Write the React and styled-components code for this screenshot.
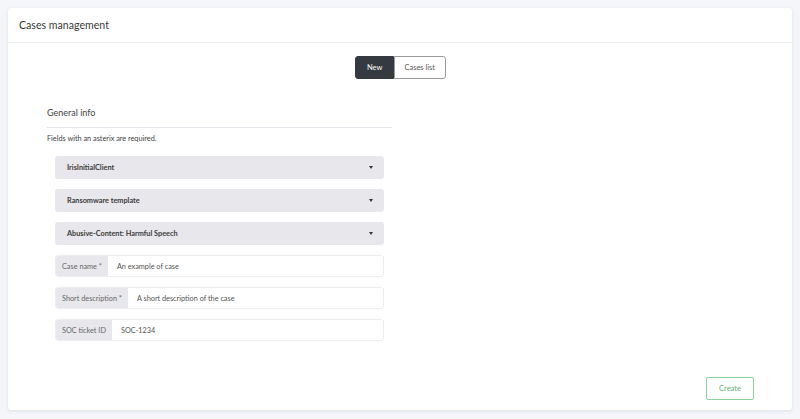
import React from 'react';
import styled, { createGlobalStyle } from 'styled-components';

const GlobalStyle = createGlobalStyle`
  html, body {
    margin: 0;
    padding: 0;
    background: #f4f6fa;
    font-family: Lato, "Open Sans", sans-serif;
    color: #333;
  }
`

const Page = styled.div`
  padding: 8px;
  height: 419px;
  box-sizing: border-box;
`

const Card = styled.div`
  background: #fff;
  border-radius: 4px;
  box-shadow: 0 1px 4px rgba(60, 70, 100, 0.12);
  height: 402px;
  display: flex;
  flex-direction: column;
`

const CardHeader = styled.div`
  height: 34px;
  display: flex;
  align-items: center;
  padding: 0 11px;
  border-bottom: 1px solid #ebedf2;
  font-size: 10.6px;
  color: #3a3a3a;
`

const CardBody = styled.div`
  flex: 1;
  display: flex;
  flex-direction: column;
  padding: 13px 38px 10px 39px;
`

const Toggle = styled.div`
  display: flex;
  justify-content: center;
`

const ToggleButton = styled.button`
  height: 23px;
  padding: 0 ${p => (p.active ? '10.5px' : '9.5px')};
  font-family: inherit;
  font-size: 7.5px;
  border: 1px solid ${p => (p.active ? '#343a40' : '#9a9a9a')};
  background: ${p => (p.active ? '#343a40' : '#fff')};
  color: ${p => (p.active ? '#fff' : '#555')};
  border-radius: ${p => (p.active ? '3px 0 0 3px' : '0 3px 3px 0')};
  cursor: pointer;
`

const Form = styled.div`
  width: 345px;
  margin-top: 28px;
`

const SectionTitle = styled.div`
  font-size: 9px;
  color: #444;
  padding-bottom: 9px;
  border-bottom: 1px solid #e3e5ea;
`

const Hint = styled.div`
  font-size: 7.3px;
  color: #444;
  margin-top: 6px;
  margin-bottom: 13px;
`

const Fields = styled.div`
  display: flex;
  flex-direction: column;
  gap: 10px;
  padding-left: 8px;
  width: 329px;
`

const Select = styled.div`
  height: 23px;
  background: #e8e8ec;
  border-radius: 3px;
  display: flex;
  align-items: center;
  justify-content: space-between;
  padding: 0 11px 0 12px;
  font-size: 7.3px;
  font-weight: 700;
  color: #3a3a3a;
`

const Caret = styled.span`
  width: 0;
  height: 0;
  border-left: 2.5px solid transparent;
  border-right: 2.5px solid transparent;
  border-top: 3px solid #333;
`

const InputGroup = styled.div`
  height: 20px;
  display: flex;
  border: 1px solid #ecedf0;
  border-radius: 3px;
  overflow: hidden;
`

const Addon = styled.div`
  background: #e8e8ec;
  display: flex;
  align-items: center;
  padding: 0 6px 0 6px;
  font-size: 7.3px;
  color: #666;
  white-space: nowrap;
`

const Value = styled.div`
  flex: 1;
  display: flex;
  align-items: center;
  padding: 0 9px;
  font-size: 7.3px;
  color: #555;
`

const Footer = styled.div`
  margin-top: auto;
  display: flex;
  justify-content: flex-end;
`

const CreateButton = styled.button`
  width: 48px;
  height: 23px;
  background: #fff;
  border: 1px solid #86d39c;
  border-radius: 2px;
  color: #5fb273;
  font-family: inherit;
  font-size: 7.5px;
  cursor: pointer;
`

const selects = ['IrisInitialClient', 'Ransomware template', 'Abusive-Content: Harmful Speech']

const inputs = [
  { label: 'Case name *', value: 'An example of case' },
  { label: 'Short description *', value: 'A short description of the case' },
  { label: 'SOC ticket ID', value: 'SOC-1234' },
]

const App = () => {
  return (
    <Page>
      <GlobalStyle />
      <Card>
        <CardHeader>Cases management</CardHeader>
        <CardBody>
          <Toggle>
            <ToggleButton active>New</ToggleButton>
            <ToggleButton>Cases list</ToggleButton>
          </Toggle>
          <Form>
            <SectionTitle>General info</SectionTitle>
            <Hint>Fields with an asterix are required.</Hint>
            <Fields>
              {selects.map(s => (
                <Select key={s}>
                  {s}
                  <Caret />
                </Select>
              ))}
              {inputs.map(i => (
                <InputGroup key={i.label}>
                  <Addon>{i.label}</Addon>
                  <Value>{i.value}</Value>
                </InputGroup>
              ))}
            </Fields>
          </Form>
          <Footer>
            <CreateButton>Create</CreateButton>
          </Footer>
        </CardBody>
      </Card>
    </Page>
  )
}

export default App;
